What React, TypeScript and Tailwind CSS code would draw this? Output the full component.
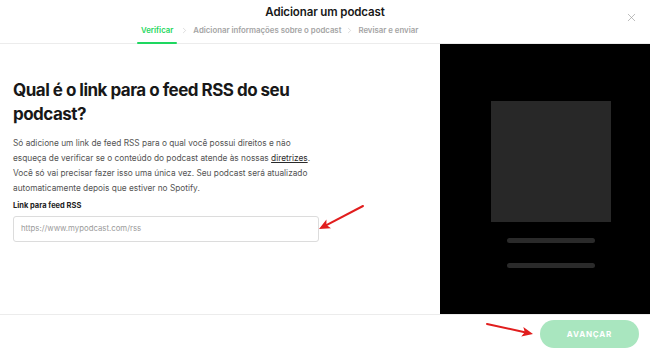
import React from 'react';
import { X, ChevronRight } from 'lucide-react';

const font = { fontFamily: 'Inter, "Noto Sans", sans-serif' };

const Arrow: React.FC<{ x1: number; y1: number; x2: number; y2: number }> = ({ x1, y1, x2, y2 }) => {
  const angle = Math.atan2(y2 - y1, x2 - x1);
  const len = 12;
  const spread = 0.42;
  const ax = x2 - len * Math.cos(angle - spread);
  const ay = y2 - len * Math.sin(angle - spread);
  const bx = x2 - len * Math.cos(angle + spread);
  const by = y2 - len * Math.sin(angle + spread);
  const mx = x2 - len * 0.7 * Math.cos(angle);
  const my = y2 - len * 0.7 * Math.sin(angle);
  return (
    <g>
      <line x1={x1} y1={y1} x2={mx} y2={my} stroke="#e11d1d" strokeWidth={2} strokeLinecap="round" />
      <polygon points={`${x2},${y2} ${ax},${ay} ${mx},${my} ${bx},${by}`} fill="#e11d1d" />
    </g>
  );
};

const App: React.FC = () => {
  return (
    <div className="relative w-[650px] h-[353px] bg-white flex flex-col overflow-hidden text-[#181818]" style={font}>
      {/* Header */}
      <header className="relative h-[44px] border-b border-[#ececec] flex flex-col">
        <h1 className="mt-[4px] self-center text-[11.5px] font-semibold leading-[16px] tracking-[-0.01em]">Adicionar um podcast</h1>
        <nav className="mt-[5px] ml-[137px] flex items-center h-[19px] text-[7.8px] font-semibold text-[#a4a4a4]">
          <span className="relative h-full flex items-start px-[4px] text-[#1ed760]">
            Verificar
            <span className="absolute left-0 right-0 bottom-[-1px] h-[2px] bg-[#1ed760] rounded-full" />
          </span>
          <ChevronRight size={9} strokeWidth={1.5} className="mx-[3px] mb-[8px] text-[#c4c4c4]" />
          <span className="h-full flex items-start px-[1px]">Adicionar informações sobre o podcast</span>
          <ChevronRight size={9} strokeWidth={1.5} className="mx-[3px] mb-[8px] text-[#c4c4c4]" />
          <span className="h-full flex items-start px-[1px]">Revisar e enviar</span>
        </nav>
        <button className="absolute right-[12px] top-[11px] text-[#9a9a9a]">
          <X size={13} strokeWidth={1.2} />
        </button>
      </header>

      {/* Body */}
      <main className="flex flex-1">
        <section className="flex-1 pl-[13px] pr-[20px] pt-[34px]">
          <h2 className="text-[17px] font-bold leading-[24px] tracking-[-0.03em] w-[300px]">
            Qual é o link para o feed RSS do seu podcast?
          </h2>
          <p className="mt-[10px] text-[8.3px] leading-[15px] text-[#535353] w-[305px]">
            Só adicione um link de feed RSS para o qual você possui direitos e não esqueça de verificar se o conteúdo do podcast atende às nossas{' '}
            <span className="underline text-[#2a2a2a]">diretrizes</span>. Você só vai precisar fazer isso uma única vez. Seu podcast será atualizado automaticamente depois que estiver no Spotify.
          </p>
          <label className="block mt-[4px] text-[7.5px] font-bold text-[#222]">Link para feed RSS</label>
          <div className="mt-[5px] w-[306px] h-[26px] border border-[#dcdcdc] rounded-[3px] flex items-center px-[7px]">
            <span className="text-[7.8px] text-[#9b9b9b]">https://www.mypodcast.com/rss</span>
          </div>
        </section>
        <aside className="w-[210px] bg-black flex flex-col items-center pt-[57px] pl-[12px]">
          <div className="w-[120px] h-[121px] bg-[#282828]" />
          <div className="mt-[16px] w-[88px] h-[5px] rounded-full bg-[#2a2a2a]" />
          <div className="mt-[20px] w-[88px] h-[5px] rounded-full bg-[#2a2a2a]" />
        </aside>
      </main>

      {/* Footer */}
      <footer className="h-[39px] border-t border-[#ececec] flex items-center justify-end pr-[11px]">
        <button className="w-[99px] h-[28px] rounded-full bg-[#a9e6bf] text-white text-[8px] font-bold tracking-[0.1em]">
          AVANÇAR
        </button>
      </footer>

      {/* Annotations */}
      <svg className="absolute inset-0 pointer-events-none" width={650} height={353}>
        <Arrow x1={363} y1={206} x2={319} y2={229} />
        <Arrow x1={487} y1={324} x2={533} y2={334} />
      </svg>
    </div>
  );
};

export default App;
